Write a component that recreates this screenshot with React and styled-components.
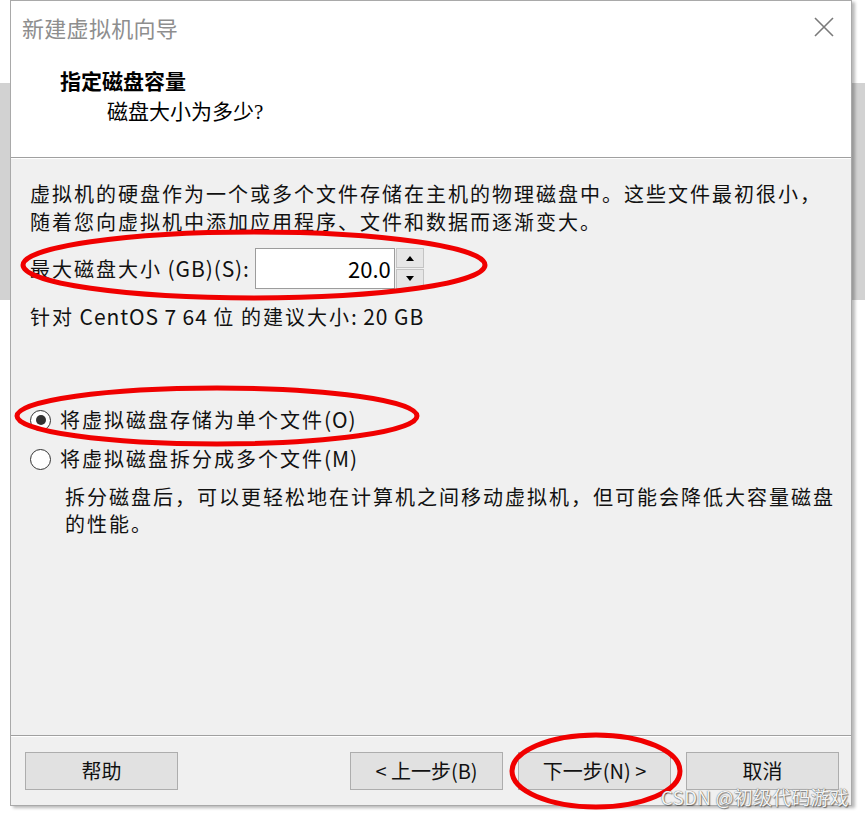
import React from 'react';
import styled, { createGlobalStyle } from 'styled-components';

const GlobalStyle = createGlobalStyle`
  html, body {
    margin: 0;
    padding: 0;
  }
  body {
    background: linear-gradient(to bottom, #fff 0 83px, #d2d2d2 83px 300px, #fff 300px);
    font-family: "Noto Sans CJK SC", "Liberation Sans", sans-serif;
    color: #111;
  }
`;

const Page = styled.div`
  position: relative;
  width: 865px;
  height: 816px;
  padding-left: 10px;
  box-sizing: border-box;
  overflow: hidden;
`;

const Window = styled.div`
  width: 842px;
  height: 806px;
  box-sizing: border-box;
  border: 1px solid #a9a9a9;
  box-shadow: 3px 2px 3px rgba(0, 0, 0, 0.28);
  background: #f0f0f0;
  display: flex;
  flex-direction: column;
`;

const TitleBar = styled.div`
  height: 52px;
  background: #fff;
  display: flex;
  align-items: center;
  justify-content: space-between;
  padding: 0 17px 0 11px;
`;

const TitleText = styled.div`
  font-size: 22px;
  color: #8e8e8e;
  letter-spacing: 0.3px;
`;

const Header = styled.div`
  height: 105px;
  box-sizing: border-box;
  background: #fff;
  padding: 13px 0 0 49px;
  border-bottom: 1px solid #a0a0a0;
`;

const HeaderTitle = styled.div`
  font-size: 21px;
  font-weight: 700;
  line-height: 28px;
  color: #000;
`;

const HeaderSub = styled.div`
  margin: 4px 0 0 47px;
  font-size: 21px;
  line-height: 28px;
  font-family: "Liberation Serif", "Noto Sans CJK SC", serif;
  color: #000;
`;

const Body = styled.div`
  flex: 1;
  border-top: 1px solid #fff;
  padding: 21px 0 0 19px;
  font-size: 20px;
  letter-spacing: 2px;
  line-height: 28px;
`;

const Latin = styled.span`
  font-size: 21px;
  line-height: 20px;
  letter-spacing: 0.9px;
`;

const Para = styled.p`
  margin: 0;
`;

const SizeRow = styled.div`
  margin-top: 12px;
  height: 41px;
  display: flex;
  align-items: center;
`;

const SpinBox = styled.div`
  display: flex;
  margin-left: 5px;
`;

const SpinInput = styled.div`
  width: 140px;
  height: 41px;
  box-sizing: border-box;
  border: 1px solid #9c9c9c;
  background: #fff;
  font-size: 22px;
  letter-spacing: 0;
  line-height: 39px;
  text-align: right;
  padding-right: 3px;
  color: #000;
`;

const SpinButtons = styled.div`
  display: flex;
  flex-direction: column;
  gap: 1px;
  margin-left: 1px;
`;

const SpinButton = styled.div`
  width: 28px;
  height: 20px;
  box-sizing: border-box;
  border: 1px solid #c4c4c4;
  background: #e6e6e6;
  display: flex;
  align-items: center;
  justify-content: center;
`;

const Recommend = styled.div`
  margin-top: 14px;
`;

const RadioGroup = styled.div`
  margin-top: 75px;
  display: flex;
  flex-direction: column;
  gap: 11px;
`;

const RadioRow = styled.label`
  display: flex;
  align-items: center;
  gap: 9px;
  height: 28px;
`;

const RadioCircle = styled.span`
  width: 21px;
  height: 21px;
  box-sizing: border-box;
  border: 1.6px solid #333;
  border-radius: 50%;
  background: #fff;
  display: flex;
  align-items: center;
  justify-content: center;
  &::after {
    content: '';
    width: 10px;
    height: 10px;
    border-radius: 50%;
    background: ${(p) => (p.$checked ? '#333' : 'transparent')};
  }
`;

const Desc = styled.p`
  margin: 10px 0 0 35px;
  line-height: 27px;
`;

const Footer = styled.div`
  height: 70px;
  box-sizing: border-box;
  border-top: 1px solid #a0a0a0;
  box-shadow: inset 0 1px 0 #fff;
  padding: 16px 12px 0 14px;
  display: flex;
  gap: 15px;
`;

const Spacer = styled.div`
  flex: 1;
`;

const Button = styled.button`
  width: 153px;
  height: 38px;
  border: 1px solid #adadad;
  background: #e1e1e1;
  font-family: "Noto Sans CJK SC", "Liberation Sans", sans-serif;
  font-size: 20px;
  color: #111;
  padding: 0;
  line-height: 36px;
  white-space: pre;
`;

const Watermark = styled.div`
  position: absolute;
  right: 16px;
  bottom: 6px;
  font-size: 19px;
  color: #f4f4f4;
  text-shadow: 0 0 1px #444, 1px 1px 1px rgba(0, 0, 0, 0.45);
  letter-spacing: 0.2px;
`;

const Marks = styled.svg`
  position: absolute;
  left: 0;
  top: 0;
  pointer-events: none;
`;

const Close = () => (
  <svg width="20" height="20" viewBox="0 0 20 20">
    <path d="M1 1 L19 19 M19 1 L1 19" stroke="#7a7a7a" strokeWidth="1.6" fill="none" />
  </svg>
);

const Arrow = ({ up }) => (
  <svg width="10" height="6" viewBox="0 0 10 6">
    <path d={up ? 'M1 6 L5 1 L9 6 Z' : 'M1 0 L5 5 L9 0 Z'} fill="#000" />
  </svg>
);

export default function App() {
  return (
    <Page>
      <GlobalStyle />
      <Window>
        <TitleBar>
          <TitleText>新建虚拟机向导</TitleText>
          <Close />
        </TitleBar>
        <Header>
          <HeaderTitle>指定磁盘容量</HeaderTitle>
          <HeaderSub>磁盘大小为多少?</HeaderSub>
        </Header>
        <Body>
          <Para>
            虚拟机的硬盘作为一个或多个文件存储在主机的物理磁盘中。这些文件最初很小，
            <br />
            随着您向虚拟机中添加应用程序、文件和数据而逐渐变大。
          </Para>
          <SizeRow>
            <span>最大磁盘大小<Latin> (GB)(S):</Latin></span>
            <SpinBox>
              <SpinInput>20.0</SpinInput>
              <SpinButtons>
                <SpinButton><Arrow up /></SpinButton>
                <SpinButton><Arrow /></SpinButton>
              </SpinButtons>
            </SpinBox>
          </SizeRow>
          <Recommend>
            针对<Latin> CentOS 7 64 </Latin>位<Latin> </Latin>的建议大小<Latin>: 20 GB</Latin>
          </Recommend>
          <RadioGroup>
            <RadioRow>
              <RadioCircle $checked />
              <span>将虚拟磁盘存储为单个文件<Latin>(O)</Latin></span>
            </RadioRow>
            <RadioRow>
              <RadioCircle />
              <span>将虚拟磁盘拆分成多个文件<Latin>(M)</Latin></span>
            </RadioRow>
          </RadioGroup>
          <Desc>
            拆分磁盘后，可以更轻松地在计算机之间移动虚拟机，但可能会降低大容量磁盘
            <br />
            的性能。
          </Desc>
        </Body>
        <Footer>
          <Button>帮助</Button>
          <Spacer />
          <Button>{'< 上一步(B)'}</Button>
          <Button>{'下一步(N) >'}</Button>
          <Button>取消</Button>
        </Footer>
      </Window>
      <Marks width="865" height="816" viewBox="0 0 865 816">
        <g fill="none" stroke="#f00000" strokeWidth="5">
          <ellipse cx="254" cy="265" rx="231" ry="33" />
          <ellipse cx="217" cy="416" rx="200" ry="28" />
          <ellipse cx="596" cy="771" rx="84" ry="36" />
        </g>
      </Marks>
      <Watermark>CSDN @初级代码游戏</Watermark>
    </Page>
  );
}
